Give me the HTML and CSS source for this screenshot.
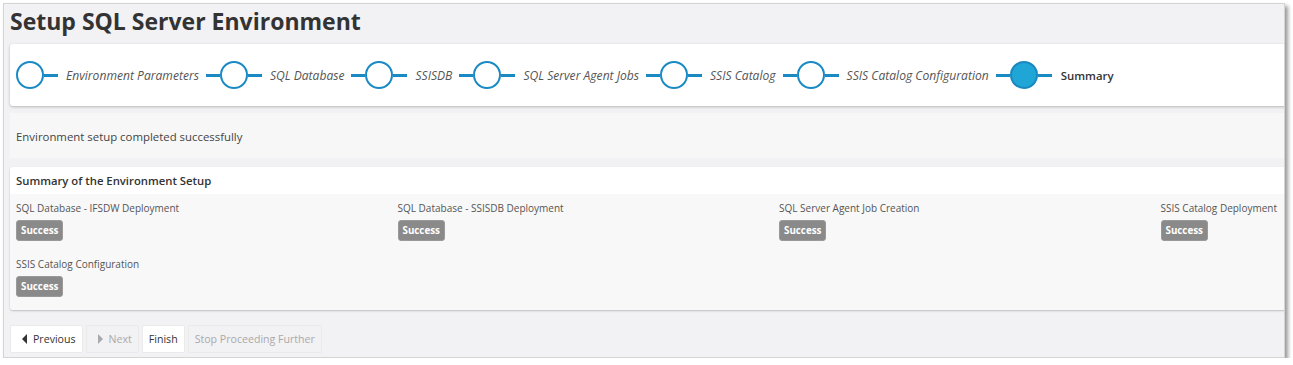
FILE: index.html
```html
<!DOCTYPE html>
<html>
<head>
<meta charset="utf-8">
<link rel="stylesheet" href="styles.css">
</head>
<body>
<div class="frame">
  <h1 class="title">Setup SQL Server Environment</h1>
  <div class="wizard">
    <div class="step first"><span class="dot"></span><span class="bar"></span><span class="label">Environment Parameters</span></div>
    <div class="step"><span class="bar"></span><span class="dot"></span><span class="bar"></span><span class="label">SQL Database</span></div>
    <div class="step"><span class="bar"></span><span class="dot"></span><span class="bar"></span><span class="label">SSISDB</span></div>
    <div class="step"><span class="bar"></span><span class="dot"></span><span class="bar"></span><span class="label">SQL Server Agent Jobs</span></div>
    <div class="step"><span class="bar"></span><span class="dot"></span><span class="bar"></span><span class="label">SSIS Catalog</span></div>
    <div class="step"><span class="bar"></span><span class="dot"></span><span class="bar"></span><span class="label">SSIS Catalog Configuration</span></div>
    <div class="step active"><span class="bar"></span><span class="dot"></span><span class="bar"></span><span class="label">Summary</span></div>
  </div>
  <div class="message">Environment setup completed successfully</div>
  <div class="summary">
    <div class="summary-head">Summary of the Environment Setup</div>
    <div class="summary-body">
      <div class="item"><div class="item-name">SQL Database - IFSDW Deployment</div><span class="badge">Success</span></div>
      <div class="item"><div class="item-name">SQL Database - SSISDB Deployment</div><span class="badge">Success</span></div>
      <div class="item"><div class="item-name">SQL Server Agent Job Creation</div><span class="badge">Success</span></div>
      <div class="item"><div class="item-name">SSIS Catalog Deployment</div><span class="badge">Success</span></div>
      <div class="item"><div class="item-name">SSIS Catalog Configuration</div><span class="badge">Success</span></div>
    </div>
  </div>
  <div class="buttons">
    <button class="btn"><span class="tri left"></span>Previous</button>
    <button class="btn disabled"><span class="tri right"></span>Next</button>
    <button class="btn">Finish</button>
    <button class="btn disabled">Stop Proceeding Further</button>
  </div>
</div>
</body>
</html>
```
FILE: styles.css
```css
html, body {
  margin: 0;
  padding: 0;
  background: #ffffff;
}
body {
  font-family: "Open Sans", "Noto Sans", sans-serif;
  color: #444;
}
.frame {
  margin: 3px 0 0 3px;
  width: 1282px;
  height: 355px;
  background: #f2f1f4;
  border: 1px solid #d4d4d4;
  box-shadow: 3px 3px 4px rgba(0,0,0,0.4);
  overflow: hidden;
  padding: 0 0 0 6px;
  box-sizing: border-box;
}
.title {
  margin: 0;
  padding: 2px 0 0 0;
  font-size: 23px;
  line-height: 30px;
  font-weight: 700;
  color: #333;
  height: 38px;
}
.wizard {
  width: 1400px;
  height: 62px;
  background: #fff;
  border-radius: 3px;
  box-shadow: 0 1px 3px rgba(0,0,0,0.25);
  display: flex;
  align-items: center;
  padding-left: 6px;
  box-sizing: border-box;
}
.step {
  display: flex;
  align-items: center;
}
.dot {
  width: 28px;
  height: 28px;
  border: 2px solid #1a8ac4;
  border-radius: 50%;
  box-sizing: border-box;
  background: #fff;
}
.active .dot {
  background: #1fa6d6;
  border-color: #1a88c0;
}
.bar {
  width: 14px;
  height: 3px;
  background: #1a8ac4;
}
.label {
  font-size: 12.1px;
  font-style: italic;
  color: #555;
  margin: 0 7px 0 8px;
}
.active .label {
  font-style: normal;
  font-weight: 600;
  font-size: 11.4px;
  color: #333;
  margin-left: 9px;
}
.message {
  margin-top: 7px;
  width: 1400px;
  height: 45px;
  background: #f7f7f7;
  font-size: 11.4px;
  line-height: 47px;
  padding-left: 6px;
  color: #444;
}
.summary {
  margin-top: 9px;
  width: 1600px;
  border-radius: 3px;
  box-shadow: 0 1px 2px rgba(0,0,0,0.22);
  overflow: hidden;
}
.summary-head {
  background: #fff;
  height: 27px;
  line-height: 27px;
  font-size: 11.3px;
  font-weight: 600;
  color: #333;
  padding-left: 6px;
}
.summary-body {
  background: #f8f8f8;
  display: grid;
  grid-template-columns: repeat(4, 381.5px);
  padding: 7px 0 13px 6px;
  row-gap: 16px;
}
.item-name {
  font-size: 10px;
  color: #555;
  line-height: 14px;
}
.badge {
  display: inline-block;
  margin-top: 5px;
  background: #8a8a8a;
  color: #fff;
  font-size: 9.8px;
  font-weight: 700;
  padding: 0 4px;
  height: 19px;
  line-height: 19px;
  border-radius: 3px;
  border: 1px solid #9a9a9a;
}
.buttons {
  margin-top: 15px;
  display: flex;
  gap: 3px;
}
.btn {
  font-family: "Open Sans", "Noto Sans", sans-serif;
  font-size: 10.6px;
  color: #333;
  background: #fff;
  border: 1px solid #eaeaea;
  border-radius: 2px;
  height: 28px;
  padding: 0 6px;
  display: flex;
  align-items: center;
  gap: 6px;
}
.btn.disabled {
  background: #f2f1f4;
  color: #aaa;
}
.tri {
  width: 0;
  height: 0;
  border-top: 5px solid transparent;
  border-bottom: 5px solid transparent;
}
.tri.left {
  border-right: 5px solid #333;
  margin-left: 5px;
}
.tri.right {
  border-left: 5px solid #aaa;
  margin-left: 5px;
}
```
